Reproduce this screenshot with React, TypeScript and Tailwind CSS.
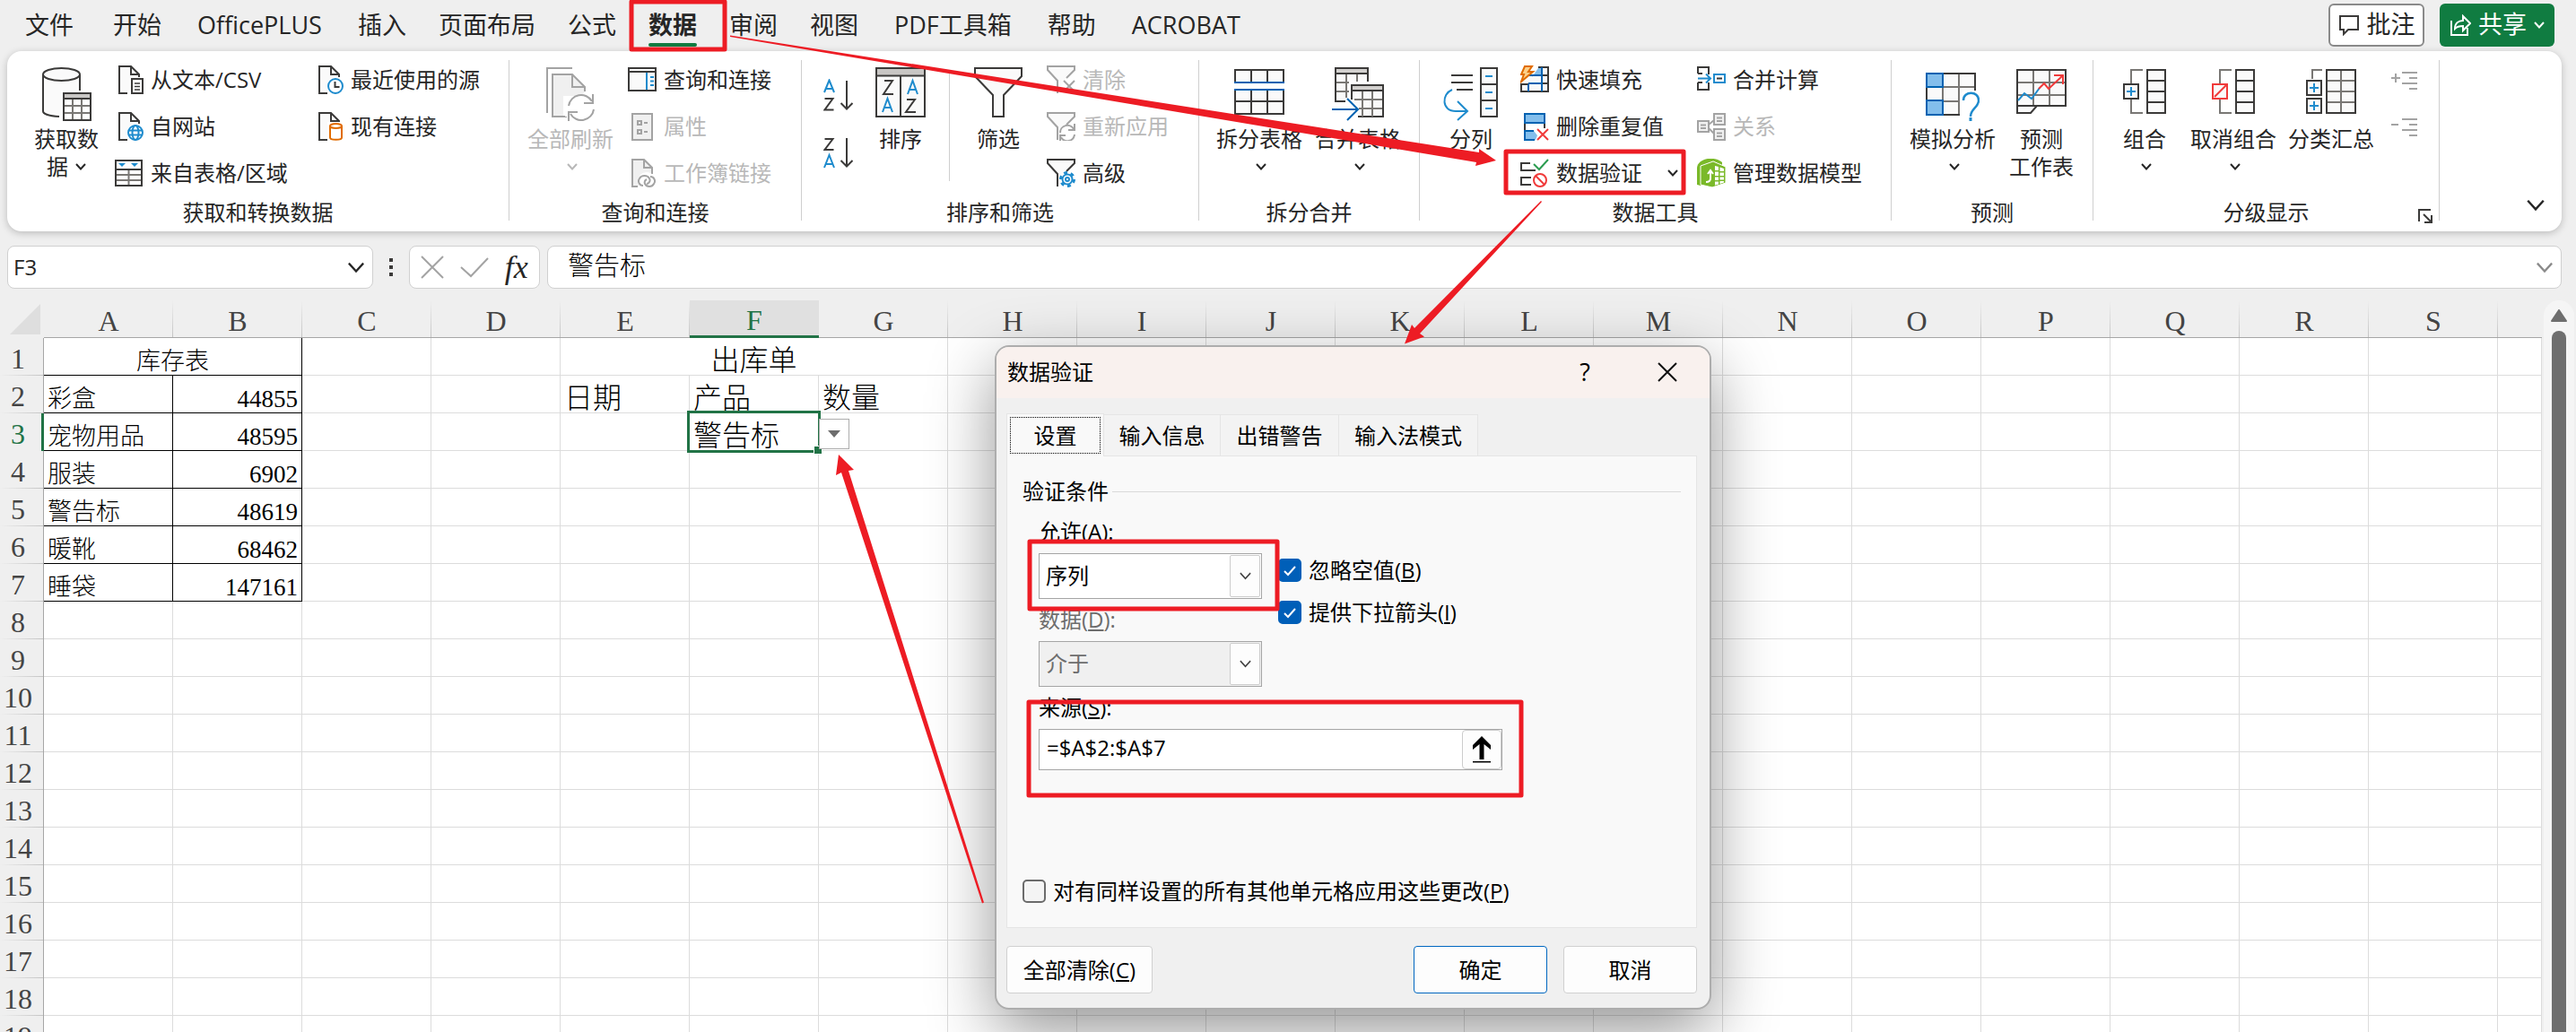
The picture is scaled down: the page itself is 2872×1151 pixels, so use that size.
import type { ReactNode } from "react";
import clsx from "clsx";

const DARK = "#3b3a39";
const BLUE = "#1e8bcd";
const DEEP_BLUE = "#0062b1";
const MUTED = "#a3a3a3";
const RED = "#ed1c24";

/* ---------- icons ---------- */

type IconProps = { w: number; h: number; children: ReactNode };

function Icon({ w, h, children }: IconProps) {
  return (
    <svg width={w} height={h} viewBox={`0 0 ${w} ${h}`} fill="none" stroke={DARK} strokeWidth="2" aria-hidden="true">
      {children}
    </svg>
  );
}

function Chevron({ w = 12, h = 8, className }: { w?: number; h?: number; className?: string }) {
  return (
    <svg width={w} height={h} viewBox="0 0 12 8" fill="none" stroke="currentColor" strokeWidth={w > 14 ? 1.4 : 2} className={className} aria-hidden="true">
      <path d="M1 1l5 5.5L11 1" />
    </svg>
  );
}

function DocBase({ color = DARK }: { color?: string }) {
  return (
    <>
      <path d="M14 31H5V1h13l9 9v3" fill="#fafafa" stroke={color} />
      <path d="M18 1v9h9" stroke={color} />
    </>
  );
}

function DatabaseIcon() {
  return (
    <Icon w={56} h={60}>
      <path d="M2 8v41c0 3 8 6 20 6V26h21V8z" fill="#fafafa" stroke="none" />
      <ellipse cx="22.500" cy="8" rx="20.500" ry="7" fill="#fafafa" />
      <path d="M2 8v41c0 3 7 5.500 18 6M43 8v18" />
      <rect x="25" y="29" width="30" height="30" fill="#fff" />
      <rect x="26" y="30" width="28" height="5" fill="#c8c6c4" stroke="none" />
      <path d="M25 35h30" />
      <path d="M26 43h28M26 51h28M35 36v22M45 36v22" stroke="#797774" />
      <rect x="25" y="29" width="30" height="30" />
    </Icon>
  );
}

function DocTextIcon() {
  return (
    <Icon w={32} h={32}>
      <DocBase />
      <rect x="19" y="15" width="12" height="16" fill="#fff" />
      <path d="M22 20h6M22 23.500h6M22 27h6" strokeWidth="1.500" />
    </Icon>
  );
}

function DocWebIcon() {
  return (
    <Icon w={32} h={32}>
      <DocBase />
      <circle cx="23" cy="23" r="10" fill="#fff" stroke="none" />
      <circle cx="23" cy="23" r="8" fill="#fff" stroke={BLUE} />
      <ellipse cx="23" cy="23" rx="3.500" ry="8" stroke={BLUE} />
      <path d="M15 20.500h16M15 25.500h16" stroke={BLUE} />
    </Icon>
  );
}

function TableRangeIcon() {
  return (
    <Icon w={32} h={32}>
      <rect x="1" y="2" width="29" height="28" fill="#fff" />
      <path d="M1 12h29" />
      <path d="M2 18h27M2 24h27M15.500 13v16" stroke="#797774" />
      <path d="M4 5h8l-4 4zM18 5h8l-4 4z" fill={BLUE} stroke="none" />
    </Icon>
  );
}

function DocRecentIcon() {
  return (
    <Icon w={32} h={32}>
      <DocBase />
      <circle cx="23" cy="23" r="10" fill="#fff" stroke="none" />
      <circle cx="23" cy="23" r="8" fill="#fff" stroke={BLUE} />
      <path d="M22.500 18v6h5" />
    </Icon>
  );
}

function DocConnIcon() {
  return (
    <Icon w={32} h={32}>
      <DocBase />
      <rect x="14" y="11" width="18" height="21" fill="#fff" stroke="none" />
      <path d="M17 15.500v13c0 3 13 3 13 0v-13" stroke="#e06c00" fill="#fff" />
      <ellipse cx="23.500" cy="15.500" rx="6.500" ry="2.500" stroke="#e06c00" />
    </Icon>
  );
}

function RefreshAllIcon() {
  return (
    <Icon w={56} h={60}>
      <g stroke={MUTED}>
        <path d="M2 51V1h28" />
        <path d="M24 55H8V8h22l14 14v5" fill="#f0f0f0" />
        <path d="M30 8v14h14" />
        <path d="M20 55V32h25v23z" fill="#fff" stroke="none" />
        <path d="M8 55h14" />
        <path d="M26 43a14 14 0 0 1 26-5M53 30v10H43M54 47a14 14 0 0 1-26 5M26 60V50h10" />
      </g>
    </Icon>
  );
}

function PaneIcon() {
  return (
    <Icon w={32} h={32}>
      <rect x="1" y="3" width="30" height="25" fill="#fafafa" />
      <path d="M1 7h30" />
      <path d="M21 8v19M25 13h4M25 17.500h4M25 22h4" stroke={BLUE} />
    </Icon>
  );
}

function PropsIcon() {
  return (
    <Icon w={32} h={32}>
      <g stroke={MUTED}>
        <rect x="5" y="2" width="22" height="29" fill="#f0f0f0" />
        <rect x="11" y="10" width="4" height="4" />
        <rect x="11" y="20" width="4" height="4" />
        <path d="M18 12h4M18 22h4" />
      </g>
    </Icon>
  );
}

function DocLinkIcon() {
  return (
    <Icon w={32} h={32}>
      <path d="M11 31H5V1h13l9 9v7" fill="#f0f0f0" stroke={MUTED} />
      <path d="M18 1v9h9" stroke={MUTED} />
      <circle cx="21" cy="25" r="10" fill="#fff" stroke="none" />
      <path d="M17 30a5 5 0 0 1-4-8c2-4 9-4 11 0a4 4 0 0 1-3 6M25 20a5 5 0 0 1 4 8c-2 4-8 4-10 0a4 4 0 0 1 2-5" stroke={MUTED} />
    </Icon>
  );
}

function SortIcon({ desc }: { desc?: boolean }) {
  const a = <path d={desc ? "M1 35 6.500 21 12 35M3 31h7" : "M1 15 6.500 1.500 12 15M3 11h7"} stroke={BLUE} />;
  const z = <path d={desc ? "M1.500 3h9L1.500 15h10" : "M1.500 22h9l-9 12.500h10"} />;
  return (
    <Icon w={34} h={38}>
      {a}
      {z}
      <path d="M26 2v31M19.500 27l6.500 6.500 6.500-6.500" />
    </Icon>
  );
}

function SortDialogIcon() {
  return (
    <Icon w={56} h={60}>
      <rect x="1" y="1" width="54" height="54" fill="#fafafa" />
      <rect x="2" y="2" width="52" height="7" fill="#c8c6c4" stroke="none" />
      <path d="M1 9.500h54M28 9v46" />
      <path d="M10 15h9L9 30h11M35 36h9L34 50h11" />
      <path d="M8 50l5.500-15L19 50M10 45h7M36 30l5.500-15L47 30M38 25h7" stroke={BLUE} />
    </Icon>
  );
}

function FilterIcon() {
  return (
    <Icon w={56} h={60}>
      <path d="M2 1h52v9L34 31v24H22V31L2 10z" fill="#fafafa" />
    </Icon>
  );
}

function FilterSmall({ color, children }: { color: string; children: ReactNode }) {
  return (
    <Icon w={32} h={32}>
      <path d="M12 31V17L1 5V1h30v4l-9 9" fill="#fafafa" stroke={color} />
      {children}
    </Icon>
  );
}

function SplitTableIcon() {
  return (
    <Icon w={56} h={60}>
      <path d="M1 16V3h54v13M1 25v27h54V25" fill="#fafafa" />
      <path d="M19 3v13M37 3v13M19 25v27M37 25v27M1 38h54" />
      <path d="M0 17h56M0 25h56" stroke={DEEP_BLUE} />
    </Icon>
  );
}

function MergeTableIcon() {
  return (
    <Icon w={60} h={60}>
      <path d="M16 38H5V1h36v16" fill="#fafafa" />
      <rect x="6" y="2" width="34" height="5" fill="#d2d0ce" stroke="none" />
      <path d="M5 7h36" />
      <path d="M6 17h18M6 27h14M17 8v26M29 8v9" stroke="#797774" />
      <rect x="20" y="16" width="40" height="44" fill="#fff" stroke="none" />
      <path d="M23 36V20h35v35H30" fill="#fafafa" />
      <rect x="24" y="21" width="33" height="5" fill="#d2d0ce" stroke="none" />
      <path d="M23 26h35" />
      <path d="M26 36h31M31 46h26M35 27v28M46 27v28" stroke="#797774" />
      <path d="M1 47h29M18 35l12 12-12 12" stroke={DEEP_BLUE} />
    </Icon>
  );
}

function TextToColumnsIcon() {
  return (
    <Icon w={62} h={60}>
      <path d="M9 9h24M9 17h24M15 25h18" />
      <path d="M10 25C-2 30-2 49 14 49h12M16 38l11 11-11 10" stroke={BLUE} />
      <rect x="42" y="1" width="18" height="54" fill="#fafafa" />
      <path d="M42 19h18M42 37h18" />
      <path d="M47 10h8M47 28h8M47 46h8" stroke={BLUE} />
    </Icon>
  );
}

function FlashFillIcon() {
  return (
    <Icon w={32} h={32}>
      <path d="M1 20v9h30V2H20" fill="#fafafa" />
      <path d="M1 21h8M24 3v25M25 11h6M25 20h6M9 21v7" />
      <path d="M13 13 20 3h4v8H13z" fill="#83beec" stroke="none" />
      <path d="M24 2v27M9 21v8M9 11h15M9 20h15" stroke={DEEP_BLUE} />
      <path d="M5 1h8l-4 6h5L1 18l3-8H1z" fill="#fcd08a" stroke="#e06c00" strokeWidth="2" />
    </Icon>
  );
}

function RemoveDupIcon() {
  return (
    <Icon w={32} h={32}>
      <path d="M5 12v8M27 12v6" />
      <rect x="5" y="2" width="22" height="10" fill="#83beec" stroke={DEEP_BLUE} />
      <path d="M17 31H5V21h10l4 5z" fill="#83beec" stroke="none" />
      <path d="M16 31H5V21h10" stroke={DEEP_BLUE} />
      <path d="M19 19l12 12M31 19 19 31" stroke="#f03a3a" />
    </Icon>
  );
}

function ValidationIcon() {
  return (
    <Icon w={32} h={32}>
      <path d="M11 5H1v8h16M12 21H1v8h11" />
      <path d="M15 6l6 6L31 1" stroke="#2b9c50" />
      <circle cx="22" cy="24" r="7" stroke="#f03a3a" />
      <path d="M17 19l10 10" stroke="#f03a3a" />
    </Icon>
  );
}

function ConsolidateIcon() {
  return (
    <Icon w={32} h={32}>
      <path d="M1 9V2h12v8M1 19v8h12v-8M1 9h5M1 19h5" />
      <path d="M1 14.500h13M10 9.500l5 5-5 5" stroke={BLUE} />
      <rect x="19" y="10" width="12" height="9" stroke={BLUE} />
      <path d="M22 14.500h6" />
    </Icon>
  );
}

function RelationsIcon() {
  return (
    <Icon w={32} h={32}>
      <g stroke={MUTED}>
        <rect x="1" y="10" width="12" height="12" fill="#f0f0f0" />
        <rect x="19" y="2" width="12" height="12" fill="#f0f0f0" />
        <rect x="19" y="19" width="12" height="12" fill="#f0f0f0" />
        <path d="M13 14l6-5M13 18l6 6M4 14.500h6M4 18h6M22 6.500h6M22 10h6M22 23.500h6M22 27h6" />
      </g>
    </Icon>
  );
}

function DataModelIcon() {
  return (
    <Icon w={32} h={32}>
      <path d="M0 29V10C1 0 18-4 28 4v5L4 30z" fill="#7ab929" stroke="none" />
      <path d="M4 8l14-5 14 6v18l-15 5L4 29z" fill="#7ab929" stroke="#fff" strokeWidth="1" />
      <path d="M20 8l4 1v4h-4zM25.500 9.500l4.500 1.500v3h-4.500zM20 14.500h4V19h-4zM25.500 15.500H30V19h-4.500zM20 20.500h4V24h-4zM25.500 20.500H30v3h-4.500zM20 25.500h4v3l-4 1zM25.500 25H30v1.500l-4.500 1.500z" fill="#fff" stroke="none" />
      <path d="M15 14v8c0 3-2 4-5 4M12 17l3-4 3 4" stroke="#fff" />
    </Icon>
  );
}

function WhatIfIcon() {
  return (
    <Icon w={60} h={60}>
      <rect x="1" y="7" width="54" height="46" fill="#fafafa" />
      <path d="M2 22h52M2 38h52M19 8v44M37 8v44" stroke="#797774" />
      <rect x="1" y="7" width="18" height="15" fill="#83beec" stroke={DEEP_BLUE} />
      <rect x="1" y="37" width="18" height="16" fill="#83beec" stroke={DEEP_BLUE} />
      <path d="M38 60V30l6-4h16v34z" fill="#fff" stroke="none" />
      <path d="M42 37c0-11 17-11 17 0 0 8-9 9-9 18" stroke={BLUE} strokeWidth="2.500" />
      <path d="M50 56v4" stroke={BLUE} strokeWidth="3" />
    </Icon>
  );
}

function ForecastIcon() {
  return (
    <Icon w={56} h={60}>
      <path d="M1 3h54v40H1zM1 43v8h15l7-8" fill="#fafafa" />
      <path d="M2 17h52M2 31h52M19 4v38M37 4v38" stroke="#797774" />
      <path d="M2 37l7-8 8 6 9-12" stroke={BLUE} />
      <path d="M25 24l6-6 5 6 15-14M42 9h10v10" stroke="#f03a3a" />
    </Icon>
  );
}

function GroupIcon({ ungroup }: { ungroup?: boolean }) {
  return (
    <Icon w={48} h={60}>
      <path d="M22 3H9v16M9 36v15h13" stroke="#797774" />
      <rect x="27" y="3" width="20" height="48" fill="#fafafa" />
      <path d="M28 15h18M28 27h18M28 39h18" />
      {ungroup ? (
        <path d="M1 19h16v16H1zM3 33 16 20" fill="#fafafa" stroke="#f03a3a" />
      ) : (
        <>
          <rect x="1" y="19" width="16" height="16" fill="#fafafa" />
          <path d="M4 27h10M9 22v10" stroke={BLUE} />
        </>
      )}
    </Icon>
  );
}

function SubtotalIcon() {
  return (
    <Icon w={56} h={60}>
      <path d="M18 3H7v10" stroke="#797774" />
      <rect x="1" y="15" width="16" height="16" fill="#fafafa" />
      <rect x="1" y="35" width="16" height="16" fill="#fafafa" />
      <path d="M4 23h10M9 18v10M4 43h10M9 38v10" stroke={BLUE} />
      <rect x="23" y="3" width="32" height="48" fill="#fafafa" />
      <path d="M24 15h30M24 27h30M24 39h30M39 4v46" stroke="#797774" />
    </Icon>
  );
}

function DetailIcon({ minus }: { minus?: boolean }) {
  return (
    <Icon w={30} h={22}>
      <path d={minus ? "M0 8h8" : "M0 8h10M5 3v10"} stroke={MUTED} />
      <path d="M12 2h17M20 8h9M12 14h17M20 20h9" stroke={MUTED} />
    </Icon>
  );
}

/* ---------- ribbon ---------- */

function BigButton({ icon, lines, chevron, muted, className }: { icon: ReactNode; lines: string[]; chevron?: "inline" | "below"; muted?: boolean; className: string }) {
  return (
    <button className={clsx("flex flex-col items-center pt-[11px] leading-[31px]", muted && "text-[#b8b8b8]", className)}>
      <span className="mb-1 flex h-[60px]">{icon}</span>
      {lines.map((line, i) => (
        <span key={line} className="flex items-center gap-2 whitespace-nowrap">
          {line}
          {chevron === "inline" && i === lines.length - 1 && <Chevron />}
        </span>
      ))}
      {chevron === "below" && <Chevron className="mt-3 ml-1" />}
    </button>
  );
}

function SmallButton({ icon, label, muted, chevron }: { icon: ReactNode; label: string; muted?: boolean; chevron?: boolean }) {
  return (
    <button className={clsx("flex h-[52px] items-center gap-2 pb-0.5 whitespace-nowrap", muted && "text-[#b8b8b8]")}>
      {icon}
      {label}
      {chevron && <Chevron className="ml-5" />}
    </button>
  );
}

function RibbonGroup({ label, className, launcher, children }: { label: string; className: string; launcher?: boolean; children: ReactNode }) {
  return (
    <>
      <section className={clsx("flex shrink-0 flex-col pt-[7px]", className)}>
        <div className="flex h-[156px] items-start">{children}</div>
        <div className="relative flex h-[34px] items-center justify-center">
          {label}
          {launcher && (
            <button aria-label="分级显示设置" className="absolute right-1.5 bottom-1">
              <Icon w={18} h={18}>
                <path d="M2 15V2h13M7 7l9 9M16 8v8H8" />
              </Icon>
            </button>
          )}
        </div>
      </section>
      <div className="mt-2.5 mb-3 w-px shrink-0 bg-[#cfcfcf]" />
    </>
  );
}

const tabs = ["文件", "开始", "OfficePLUS", "插入", "页面布局", "公式", "数据", "审阅", "视图", "PDF工具箱", "帮助", "ACROBAT"];

function TabBar() {
  return (
    <header className="flex h-[57px] shrink-0 items-center pr-6 pb-0.5 text-[27px] text-[#262626]">
      <nav className="flex flex-1 items-center pl-[10px]">
        {tabs.map((tab) => (
          <button
            key={tab}
            className={clsx("relative leading-[40px] whitespace-nowrap first:mr-2", /[A-Z]/.test(tab) ? "px-[22px]" : "px-[18px]", tab === "数据" && "font-bold")}
          >
            {tab}
            {tab === "数据" && <span className="absolute inset-x-[18px] -bottom-1 h-1 rounded-full bg-[#107c41]" />}
          </button>
        ))}
      </nav>
      <button className="flex h-12 w-[107px] items-center justify-center gap-2 rounded-md border-2 border-[#8a8a8a] bg-white">
        <Icon w={24} h={24}>
          <path d="M2 2h20v15H11l-5 5v-5H2z" />
        </Icon>
        批注
      </button>
      <button className="ml-[17px] flex h-12 w-32 items-center justify-center gap-2 rounded-md bg-[#107c41] text-white">
        <svg width="24" height="24" viewBox="0 0 24 24" fill="none" stroke="#fff" strokeWidth="2" aria-hidden="true">
          <path d="M2 7v16h18v-8M6 16c0-6 4-9 9-9V2l8 8-8 8v-5c-4 0-7 1-9 3z" />
        </svg>
        共享
        <Chevron />
      </button>
    </header>
  );
}

function Ribbon() {
  return (
    <div className="mr-4 ml-2 flex h-[201px] shrink-0 rounded-2xl bg-white text-2xl text-[#262626] shadow-[0_2px_8px_rgba(0,0,0,0.22)]">
      <RibbonGroup label="获取和转换数据" className="w-[559px]">
        <BigButton className="ml-3 w-[108px]" icon={<DatabaseIcon />} lines={["获取数", "据"]} chevron="inline" />
        <div className="flex w-[223px] flex-col">
          <SmallButton icon={<DocTextIcon />} label="从文本/CSV" />
          <SmallButton icon={<DocWebIcon />} label="自网站" />
          <SmallButton icon={<TableRangeIcon />} label="来自表格/区域" />
        </div>
        <div className="flex flex-col">
          <SmallButton icon={<DocRecentIcon />} label="最近使用的源" />
          <SmallButton icon={<DocConnIcon />} label="现有连接" />
        </div>
      </RibbonGroup>

      <RibbonGroup label="查询和连接" className="w-[325px]">
        <BigButton className="ml-1 w-32" icon={<RefreshAllIcon />} lines={["全部刷新"]} chevron="below" muted />
        <div className="flex flex-col">
          <SmallButton icon={<PaneIcon />} label="查询和连接" />
          <SmallButton icon={<PropsIcon />} label="属性" muted />
          <SmallButton icon={<DocLinkIcon />} label="工作簿链接" muted />
        </div>
      </RibbonGroup>

      <RibbonGroup label="排序和筛选" className="w-[442px]">
        <div className="flex flex-col gap-[26px] pt-6 pl-6">
          <button aria-label="升序">
            <SortIcon />
          </button>
          <button aria-label="降序">
            <SortIcon desc />
          </button>
        </div>
        <BigButton className="ml-2 w-[88px]" icon={<SortDialogIcon />} lines={["排序"]} />
        <div className="mt-4 ml-2.5 h-[122px] w-px bg-[#cfcfcf]" />
        <BigButton className="ml-3 w-[84px]" icon={<FilterIcon />} lines={["筛选"]} />
        <div className="ml-3 flex flex-col">
          <SmallButton
            icon={
              <FilterSmall color={MUTED}>
                <path d="M19 17l12 12M31 17 19 29" stroke={MUTED} />
              </FilterSmall>
            }
            label="清除"
            muted
          />
          <SmallButton
            icon={
              <FilterSmall color={MUTED}>
                <path d="M15 23a8 8 0 0 1 15-4M31 13v7h-7M31 25a8 8 0 0 1-15 3M15 32v-6h6" stroke={MUTED} />
              </FilterSmall>
            }
            label="重新应用"
            muted
          />
          <SmallButton
            icon={
              <FilterSmall color={DARK}>
                <circle cx="23" cy="23" r="5.500" fill="#fff" stroke={BLUE} strokeWidth="2" />
                <circle cx="23" cy="23" r="7.500" stroke={BLUE} strokeWidth="3" strokeDasharray="3.900 3.900" />
                <circle cx="23" cy="23" r="2" stroke={BLUE} />
              </FilterSmall>
            }
            label="高级"
          />
        </div>
      </RibbonGroup>

      <RibbonGroup label="拆分合并" className="w-[245px]">
        <BigButton className="ml-3 w-[110px]" icon={<SplitTableIcon />} lines={["拆分表格"]} chevron="below" />
        <BigButton className="w-[110px]" icon={<MergeTableIcon />} lines={["合并表格"]} chevron="below" />
      </RibbonGroup>

      <RibbonGroup label="数据工具" className="w-[525px]">
        <BigButton className="ml-3 w-[90px]" icon={<TextToColumnsIcon />} lines={["分列"]} />
        <div className="ml-2.5 flex w-[197px] flex-col">
          <SmallButton icon={<FlashFillIcon />} label="快速填充" />
          <SmallButton icon={<RemoveDupIcon />} label="删除重复值" />
          <SmallButton icon={<ValidationIcon />} label="数据验证" chevron />
        </div>
        <div className="flex flex-col">
          <SmallButton icon={<ConsolidateIcon />} label="合并计算" />
          <SmallButton icon={<RelationsIcon />} label="关系" muted />
          <SmallButton icon={<DataModelIcon />} label="管理数据模型" />
        </div>
      </RibbonGroup>

      <RibbonGroup label="预测" className="w-[224px]">
        <BigButton className="ml-4 w-[104px]" icon={<WhatIfIcon />} lines={["模拟分析"]} chevron="below" />
        <BigButton className="w-[94px]" icon={<ForecastIcon />} lines={["预测", "工作表"]} />
      </RibbonGroup>

      <RibbonGroup label="分级显示" className="w-[385px]" launcher>
        <BigButton className="ml-3 w-[90px]" icon={<GroupIcon />} lines={["组合"]} chevron="below" />
        <BigButton className="w-[108px]" icon={<GroupIcon ungroup />} lines={["取消组合"]} chevron="below" />
        <BigButton className="w-[110px]" icon={<SubtotalIcon />} lines={["分类汇总"]} />
        <div className="ml-3 flex flex-col gap-[30px] pt-[15px]">
          <button aria-label="显示明细数据">
            <DetailIcon />
          </button>
          <button aria-label="隐藏明细数据">
            <DetailIcon minus />
          </button>
        </div>
      </RibbonGroup>

      <div className="flex flex-1 items-end justify-end pr-[18px] pb-[22px]">
        <button aria-label="折叠功能区">
          <Chevron w={22} h={14} />
        </button>
      </div>
    </div>
  );
}

function FormulaBar() {
  return (
    <div className="mt-4 mr-4 ml-2 flex h-12 shrink-0 items-center text-[#262626]">
      <label className="flex h-full w-[408px] items-center rounded-lg border border-[#d0d0d0] bg-white pr-2">
        <input aria-label="名称框" defaultValue="F3" className="min-w-0 flex-1 pl-1.5 text-2xl outline-none" />
        <Chevron w={20} h={13} />
      </label>
      <svg width="40" height="24" viewBox="0 0 40 24" fill={DARK} aria-hidden="true">
        <path d="M18 2h4v4h-4zM18 10h4v4h-4zM18 18h4v4h-4z" />
      </svg>
      <div className="flex h-full w-[146px] items-center justify-around rounded-lg border border-[#d0d0d0] bg-white px-1">
        <button aria-label="取消输入">
          <svg width="26" height="26" viewBox="0 0 26 26" fill="none" stroke={MUTED} strokeWidth="2" aria-hidden="true">
            <path d="M1 1l24 24M25 1 1 25" />
          </svg>
        </button>
        <button aria-label="确认输入">
          <svg width="34" height="24" viewBox="0 0 34 24" fill="none" stroke={MUTED} strokeWidth="2" aria-hidden="true">
            <path d="M2 12l11 10L32 2" />
          </svg>
        </button>
        <button className="font-['Liberation_Serif',serif] text-4xl leading-none italic">fx</button>
      </div>
      <label className="ml-2 flex h-full flex-1 items-center rounded-lg border border-[#d0d0d0] bg-white pr-2 text-[#8a8a8a]">
        <input
          aria-label="编辑栏"
          defaultValue="警告标"
          className="min-w-0 flex-1 pl-[22px] font-['Liberation_Serif','Noto_Sans_CJK_SC',serif] text-[29px] font-light text-black outline-none"
        />
        <Chevron w={20} h={13} />
      </label>
    </div>
  );
}

/* ---------- sheet ---------- */

const columns = "ABCDEFGHIJKLMNOPQRS".split("");
const rowCount = 19;

const stock: [string, number][] = [
  ["彩盒", 44855],
  ["宠物用品", 48595],
  ["服装", 6902],
  ["警告标", 48619],
  ["暖靴", 68462],
  ["睡袋", 147161],
];

const orderCells: Record<string, string> = { E2: "日期", F2: "产品", G2: "数量", F3: "警告标" };

const cell = "h-[42px] border-r border-b p-0 leading-[30px] font-light whitespace-nowrap";
const plain = "border-[#dcdcdc]";

function SheetRow({ row }: { row: number }) {
  const item = stock[row - 2];
  const active = row === 3;
  return (
    <tr>
      <th
        scope="row"
        className={clsx(
          "h-[42px] p-0 pt-1 text-center text-[32px] leading-[36px] font-normal",
          active
            ? "border-r-[3px] border-[#217346] bg-[#e0e0e0] pr-1.5 text-[#217346]"
            : "border-r border-[#a6a6a6] bg-[linear-gradient(to_right,transparent,#c4c4c4)] bg-[length:100%_1px] bg-bottom bg-no-repeat pr-2 text-[#444]",
        )}
      >
        {row}
      </th>
      {row === 1 && (
        <td colSpan={2} className={clsx(cell, "border-black pt-2.5 text-center text-[27px]")}>
          库存表
        </td>
      )}
      {item && (
        <>
          <td className={clsx(cell, "border-black pt-2.5 pl-1 text-[27px]")}>{item[0]}</td>
          <td className={clsx(cell, "border-black pt-2.5 pr-1 text-right text-[27px]")}>{item[1]}</td>
        </>
      )}
      {columns.map((col) => {
        if (col < "C" && row < 8) return null;
        if (row === 1 && (col === "F" || col === "G")) return null;
        if (row === 1 && col === "E")
          return (
            <td key={col} colSpan={3} className={clsx(cell, plain, "pt-2 text-center text-[32px]")}>
              出库单
            </td>
          );
        const text = orderCells[col + row];
        if (col + row === "F3")
          return (
            <td key={col} className={clsx(cell, plain, "relative pt-2 pl-1 text-[32px]")}>
              {text}
              <span className="absolute -top-[3px] -right-[3px] -bottom-[3px] -left-[3px] border-[3px] border-[#217346]" />
              <span className="absolute -right-1 -bottom-1 size-2 bg-[#217346] outline outline-white" />
              <button aria-label="下拉列表" className="absolute top-1.5 -right-[35px] flex size-[34px] items-center justify-center border border-[#acacac] bg-white">
                <svg width="14" height="8" viewBox="0 0 14 8" fill="#6d6d6d" aria-hidden="true">
                  <path d="M0 0h14L7 8z" />
                </svg>
              </button>
            </td>
          );
        return (
          <td key={col} className={clsx(cell, plain, text && "pt-2 pl-1 text-[32px]")}>
            {text}
          </td>
        );
      })}
      <td className={clsx(cell, plain)} />
    </tr>
  );
}

function Sheet() {
  return (
    <main className="mt-[13px] flex min-h-0 flex-1">
      <div className="min-w-0 flex-1 overflow-hidden font-['Liberation_Serif','Noto_Sans_CJK_SC',serif] text-black">
        <table className="w-full table-fixed border-separate border-spacing-0 bg-white">
          <colgroup>
            <col className="w-[49px]" />
            {columns.map((col) => (
              <col key={col} className="w-[144px]" />
            ))}
            <col />
          </colgroup>
          <thead>
            <tr className="bg-[#efefef]">
              <th aria-label="全选" className="h-[42px] p-0 pr-1 align-top">
                <svg width="34" height="34" viewBox="0 0 34 34" fill="#dedede" className="mt-1 ml-auto" aria-hidden="true">
                  <path d="M34 0v34H0z" />
                </svg>
              </th>
              {columns.map((col) => (
                <th
                  key={col}
                  scope="col"
                  className={clsx(
                    "h-[42px] p-0 pt-1 text-[32px] leading-[34px] font-normal",
                    col === "F"
                      ? "border-b-[3px] border-[#217346] bg-[#e0e0e0] text-[#217346]"
                      : "border-b border-[#a6a6a6] bg-[linear-gradient(to_bottom,transparent,#c4c4c4)] bg-[length:1px_100%] bg-right bg-no-repeat text-[#444]",
                  )}
                >
                  {col}
                </th>
              ))}
              <th className="border-b border-[#a6a6a6]" />
            </tr>
          </thead>
          <tbody className="[&_th]:bg-[#efefef]">
            {Array.from({ length: rowCount }, (_, i) => (
              <SheetRow key={i} row={i + 1} />
            ))}
          </tbody>
        </table>
      </div>
      <div className="flex w-[38px] shrink-0 px-0.5">
        <div className="flex w-full flex-col items-center gap-2.5 rounded-t-full bg-[#f5f5f5] pt-2.5">
          <svg width="18" height="14" viewBox="0 0 18 14" fill="#6e6e6e" stroke="#6e6e6e" strokeWidth="2" strokeLinejoin="round" className="shrink-0" aria-hidden="true">
            <path d="M9 1l8 12H1z" />
          </svg>
          <div className="w-4 flex-1 rounded-t-lg bg-[#6e6e6e]" />
        </div>
      </div>
    </main>
  );
}

/* ---------- dialog ---------- */

function Field({ id, name, hotkey, value, muted }: { id: string; name: string; hotkey: string; value: string; muted?: boolean }) {
  return (
    <div className={clsx("w-[249px]", muted && "text-[#6d6d6d]")}>
      <label htmlFor={id} className="block h-[47px] leading-[46px]">
        {name}(<u>{hotkey}</u>):
      </label>
      <div className="relative h-[51px]">
        <select
          id={id}
          disabled={muted}
          className={clsx("size-full appearance-none border border-[#a5a5a5] pb-0.5 pl-[7px]", muted ? "bg-[#f0f0f0] opacity-100" : "bg-white")}
        >
          <option>{value}</option>
        </select>
        <span className="pointer-events-none absolute inset-y-0.5 right-0.5 flex w-[34px] items-center justify-center rounded-xs border border-[#ccc] bg-[#fdfdfd] text-[#444]">
          <Chevron w={15} h={9} />
        </span>
      </div>
    </div>
  );
}

function Check({ children, checked }: { children: ReactNode; checked?: boolean }) {
  return (
    <label className="flex h-[47px] items-center gap-2">
      <span className="relative flex size-[26px] shrink-0">
        <input
          type="checkbox"
          defaultChecked={checked}
          className="peer size-full appearance-none rounded-[5px] border-2 border-[#6b6b6b] bg-[#f4f4f4] checked:border-[#005fb8] checked:bg-[#005fb8]"
        />
        <svg viewBox="0 0 26 26" fill="none" stroke="#fff" strokeWidth="2" className="pointer-events-none absolute inset-0 hidden peer-checked:block" aria-hidden="true">
          <path d="M7 14l4 4 8-9" />
        </svg>
      </span>
      <span>{children}</span>
    </label>
  );
}

const dialogTabs = [
  { label: "输入信息", className: "w-[130px]" },
  { label: "出错警告", className: "w-[132px]" },
  { label: "输入法模式", className: "w-[155px]" },
];

function ValidationDialog() {
  return (
    <div
      role="dialog"
      aria-label="数据验证"
      className="absolute top-[385px] left-[1109px] flex w-[799px] flex-col overflow-hidden rounded-2xl border-2 border-[#adadad] bg-[#f0f0f0] text-2xl text-black shadow-[0_24px_72px_rgba(0,0,0,0.42)]"
    >
      <div className="flex h-[57px] items-center bg-[#f9f1ee] pr-9 pb-0.5 pl-3">
        <h2 className="flex-1">数据验证</h2>
        <button aria-label="帮助" className="w-10 text-[27px]">
          ?
        </button>
        <button aria-label="关闭" className="ml-[61px]">
          <Icon w={22} h={22}>
            <path d="M1 1l20 20M21 1 1 21" stroke="#111" />
          </Icon>
        </button>
      </div>

      <div className="flex items-end pt-[17px] pl-[11px]">
        <button className="relative z-10 -mb-px flex h-12 w-[109px] border border-b-0 border-[#e5e5e5] bg-[#f9f9f9] p-[3px]">
          <span className="flex size-full items-center justify-center border border-dotted border-black">设置</span>
        </button>
        {dialogTabs.map((tab) => (
          <button key={tab.label} className={clsx("h-[46px] border border-b-0 border-l-0 border-[#e5e5e5] bg-[#f3f3f3]", tab.className)}>
            {tab.label}
          </button>
        ))}
      </div>

      <div className="mr-3.5 ml-[11px] flex h-[527px] flex-col border border-[#e5e5e5] bg-[#f9f9f9] px-[17px] pt-[23px]">
        <div className="flex items-center gap-1">
          <span className="leading-[32px]">验证条件</span>
          <span className="h-px flex-1 bg-[#d9d9d9]" />
        </div>
        <div className="flex gap-[18px] pt-1.5 pl-[18px]">
          <div>
            <Field id="allow" name="允许" hotkey="A" value="序列" />
            <Field id="data" name="数据" hotkey="D" value="介于" muted />
          </div>
          <div className="pt-[42px]">
            <Check checked>
              忽略空值(<u>B</u>)
            </Check>
            <Check checked>
              提供下拉箭头(<u>I</u>)
            </Check>
          </div>
        </div>
        <div className="w-[535px] pl-[18px]">
          <label htmlFor="source" className="block h-[47px] leading-[46px]">
            来源(<u>S</u>):
          </label>
          <div className="flex h-[46px] border border-[#a5a5a5] bg-white">
            <input id="source" defaultValue="=$A$2:$A$7" className="min-w-0 flex-1 pb-1 pl-2 outline-none" />
            <button aria-label="折叠对话框" className="flex w-11 items-center justify-center rounded-sm border border-[#ccc] bg-[#fdfdfd]">
              <svg width="22" height="30" viewBox="0 0 22 30" fill="#000" aria-hidden="true">
                <path d="M11 0l10 10v5l-7.500-6v17h-5V9L1 15v-5zM1 28h20v1.500H1z" />
              </svg>
            </button>
          </div>
        </div>
        <div className="mt-auto pb-[17px]">
          <Check>
            对有同样设置的所有其他单元格应用这些更改(<u>P</u>)
          </Check>
        </div>
      </div>

      <div className="flex gap-[18px] pt-5 pr-3.5 pb-4 pl-[11px]">
        <button className="mr-auto h-[53px] w-[163px] rounded-sm border border-[#d0d0d0] bg-[#fdfdfd]">
          全部清除(<u>C</u>)
        </button>
        <button className="h-[53px] w-[149px] rounded-sm border border-[#0067c0] bg-[#fdfdfd]">确定</button>
        <button className="h-[53px] w-[149px] rounded-sm border border-[#d0d0d0] bg-[#fdfdfd]">取消</button>
      </div>
    </div>
  );
}

// red boxes and arrows drawn over everything else
function Annotations() {
  return (
    <svg width="2872" height="1151" viewBox="0 0 2872 1151" fill="none" className="pointer-events-none absolute top-0 left-0" aria-hidden="true">
      <g stroke={RED} strokeWidth="5" strokeLinejoin="round">
        <rect x="704" y="2" width="104" height="53" />
        <rect x="1679" y="169" width="198" height="46" />
        <rect x="1148" y="604" width="276" height="75" />
        <rect x="1147" y="783" width="549" height="104" />
      </g>
      <g fill={RED}>
        <path d="M814 39.500 1649 170l0-4 19 13-23 6 1-4L814 41z" />
        <path d="M1718 224l1 1-136 147 5 3.500-22 8 8-21.500 3 4z" />
        <path d="M1095 1007.500 938 527l-6 3 3-23 17 17-6 1 151 481.500z" />
      </g>
    </svg>
  );
}

export default function App() {
  return (
    <div className="relative flex h-screen flex-col overflow-hidden bg-[#efefef] font-['Open_Sans','Noto_Sans_CJK_SC',sans-serif]">
      <TabBar />
      <Ribbon />
      <FormulaBar />
      <Sheet />
      <ValidationDialog />
      <Annotations />
    </div>
  );
}
